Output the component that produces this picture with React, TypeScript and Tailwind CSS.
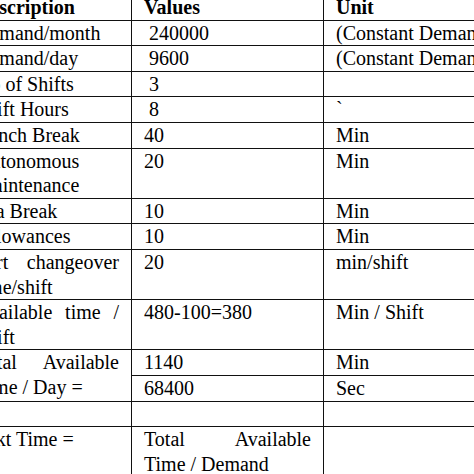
type Row = {
  desc?: string;
  value?: string;
  unit?: string;
  span?: number;
  skipDesc?: boolean;
};

const rows: Row[] = [
  { desc: "Demand/month", value: "\u00a0240000", unit: "(Constant Demand)" },
  { desc: "Demand/day", value: "\u00a09600", unit: "(Constant Demand)" },
  { desc: "No of Shifts", value: "\u00a03", unit: "" },
  { desc: "Shift Hours", value: "\u00a08", unit: "`" },
  { desc: "Lunch Break", value: "40", unit: "Min" },
  { desc: "Autonomous Maintenance", value: "20", unit: "Min" },
  { desc: "Tea Break", value: "10", unit: "Min" },
  { desc: "Allowances", value: "10", unit: "Min" },
  { desc: "Part changeover time/shift", value: "20", unit: "min/shift" },
  { desc: "Available time / Shift", value: "480-100=380", unit: "Min / Shift" },
  { desc: "Total Available Time / Day =", value: "1140", unit: "Min", span: 2 },
  { skipDesc: true, value: "68400", unit: "Sec" },
  { desc: "", value: "", unit: "" },
  { desc: "Takt Time =", value: "Total Available Time / Demand", unit: "" },
];

const cell = "border border-[#111] px-[12px] py-0 align-top text-justify";

export default function App() {
  return (
    <div className="h-[474px] w-[474px] overflow-hidden bg-white">
      <table
        className="-ml-[37px] -mt-[6px] w-[580px] table-fixed border-collapse text-[20px] leading-[24.6px] text-black"
        style={{ fontFamily: '"Liberation Serif", "Times New Roman", serif' }}
      >
        <colgroup>
          <col className="w-[168px]" />
          <col className="w-[192px]" />
          <col className="w-[220px]" />
        </colgroup>
        <thead>
          <tr className="font-bold">
            <th className={`${cell} text-left`}>Description</th>
            <th className={`${cell} text-left`}>Values</th>
            <th className={`${cell} text-left`}>Unit</th>
          </tr>
        </thead>
        <tbody>
          {rows.map((row, i) => (
            <tr key={i}>
              {row.skipDesc ? null : (
                <td className={cell} rowSpan={row.span ?? 1}>
                  {row.desc || "\u00a0"}
                </td>
              )}
              <td className={cell}>{row.value || "\u00a0"}</td>
              <td className={`${cell} whitespace-nowrap`}>{row.unit || "\u00a0"}</td>
            </tr>
          ))}
        </tbody>
      </table>
    </div>
  );
}
